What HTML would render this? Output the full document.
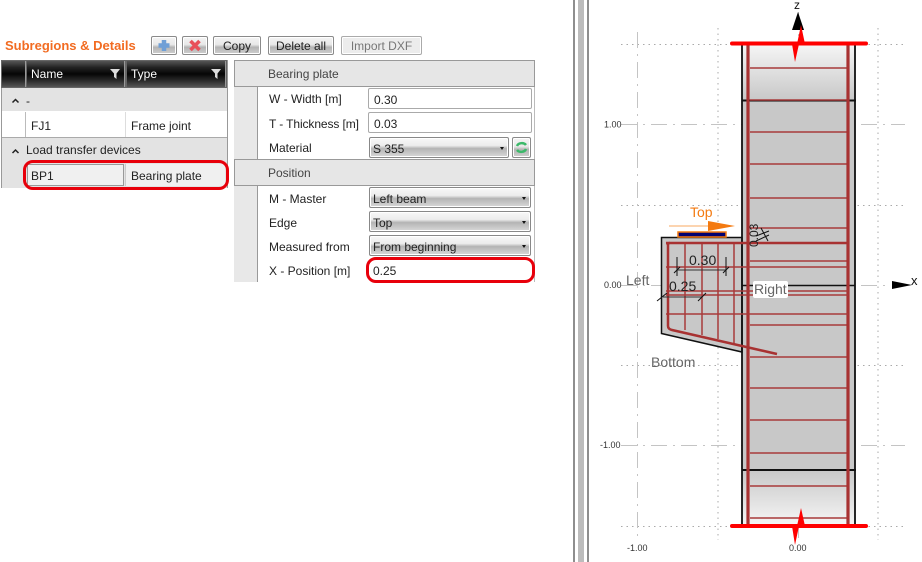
<!DOCTYPE html>
<html><head><meta charset="utf-8">
<style>
html,body{margin:0;padding:0;background:#fff;}
#p{position:relative;width:922px;height:562px;overflow:hidden;background:#fff;font:12px "Liberation Sans",sans-serif;color:#222;}
#p div{position:absolute;box-sizing:border-box;white-space:nowrap;}
.btn{height:19px;top:36px;border:1px solid #8a8a8a;border-radius:2px;background:linear-gradient(#f4f4f4 0,#e8e8e8 45%,#b4b4b4 60%,#cfcfcf 100%);text-align:center;line-height:18px;box-shadow:inset 0 0 0 1px #fff;}
.hd{top:61px;height:26px;background:linear-gradient(#555 0,#222 25%,#060606 50%,#2a2a2a 75%,#555 100%);color:#fff;line-height:27px;padding-left:4px;border-right:1px solid #999;}
.t{line-height:14px;height:14px;}
.inp{left:368px;width:164px;height:21px;border:1px solid #aaa;border-radius:2px;background:#fff;padding-left:5px;line-height:22px;}
.sel{left:369px;height:21px;width:162px;border:1px solid #888;border-radius:2px;background:linear-gradient(#f8f8f8 0,#ececec 40%,#b4b4b4 55%,#d8d8d8 100%);padding-left:3px;line-height:22px;box-shadow:inset 0 0 0 1px #fff;}
.sel:after{content:"";position:absolute;right:4px;top:9px;border-left:2.5px solid transparent;border-right:2.5px solid transparent;border-top:3px solid #111;}
</style></head>
<body><div id="p">

<div class="t" style="left:5px;top:39px;font-weight:bold;color:#f26b21;font-size:13px;">Subregions &amp; Details</div>
<div class="btn" style="left:151px;width:26px;"></div>
<div class="btn" style="left:182px;width:26px;"></div>
<div class="btn" style="left:213px;width:48px;">Copy</div>
<div class="btn" style="left:268px;width:66px;">Delete all</div>
<div class="btn" style="left:341px;width:81px;background:#ececec;color:#777;border-color:#aaa;">Import DXF</div>
<svg style="position:absolute;left:151px;top:36px" width="60" height="19">
<path d="M13 4v11M7.5 9.5h11" stroke="#6f9fd6" stroke-width="4.5" fill="none"/>
<path d="M39.5 5l9 9M48.5 5l-9 9" stroke="#e8505a" stroke-width="3.6" fill="none"/>
</svg>

<div style="left:1px;top:60px;width:227px;height:128px;border:1px solid #999;border-top:0;background:#fff;"></div>
<div style="left:1px;top:60px;width:226px;height:28px;background:#666;"></div>
<div class="hd" style="left:2px;width:24px;"></div>
<div class="hd" style="left:27px;width:98px;">Name</div>
<div class="hd" style="left:127px;width:99px;">Type</div>
<svg style="position:absolute;left:108px;top:67px" width="115" height="14">
<path d="M2 2h10L8.5 6.5V12L6 10V6.500z" fill="#ddd"/><path d="M103 2h10l-3.500 4.500V12L107 10V6.500z" fill="#ddd"/></svg>

<div style="left:2px;top:88px;width:225px;height:23px;background:#e3e3e3;"></div>
<div style="left:25px;top:112px;width:201px;height:25px;background:#fff;border-left:1px solid #bbb;"></div>
<div style="left:125px;top:112px;width:1px;height:25px;background:#ddd;"></div>
<div style="left:2px;top:137px;width:225px;height:26px;background:#e3e3e3;border-top:1px solid #aaa;"></div>
<div style="left:2px;top:163px;width:225px;height:25px;background:#e3e3e3;"></div>
<div style="left:27px;top:164px;width:97px;height:22px;background:#f0f0f0;border:1px solid #999;"></div>
<div style="left:125px;top:164px;width:100px;height:22px;background:#f0f0f0;border-left:1px solid #ccc;"></div>
<svg style="position:absolute;left:10px;top:95px" width="12" height="60">
<path d="M2.500 7.500L5.500 4.500L8.500 7.500M2.500 58L5.500 55L8.500 58" stroke="#222" stroke-width="1.500" fill="none"/></svg>
<div class="t" style="left:26px;top:94px;">-</div>
<div class="t" style="left:31px;top:119px;">FJ1</div>
<div class="t" style="left:131px;top:119px;">Frame joint</div>
<div class="t" style="left:26px;top:143px;">Load transfer devices</div>
<div class="t" style="left:31px;top:169px;">BP1</div>
<div class="t" style="left:131px;top:169px;">Bearing plate</div>
<div style="left:23px;top:160px;width:206px;height:30px;border:3px solid #e8000b;border-radius:10px;"></div>

<div style="left:234px;top:60px;width:301px;height:222px;background:#fff;"></div>
<div style="left:234px;top:60px;width:24px;height:222px;background:#e8e8e8;border-right:1px solid #999;"></div>
<div style="left:234px;top:60px;width:301px;height:27px;background:#e6e6e6;border:1px solid #999;color:#444;padding-left:33px;line-height:26px;">Bearing plate</div>
<div style="left:234px;top:159px;width:301px;height:27px;background:#e6e6e6;border:1px solid #999;color:#444;padding-left:33px;line-height:26px;">Position</div>
<div style="left:534px;top:87px;width:1px;height:72px;background:#bbb;"></div>
<div style="left:534px;top:186px;width:1px;height:96px;background:#bbb;"></div>
<div class="t" style="left:269px;top:92px;">W - Width [m]</div>
<div class="t" style="left:269px;top:117px;letter-spacing:-.1px;">T - Thickness [m]</div>
<div class="t" style="left:269px;top:141px;">Material</div>
<div class="t" style="left:269px;top:192px;">M - Master</div>
<div class="t" style="left:269px;top:216px;">Edge</div>
<div class="t" style="left:269px;top:240px;">Measured from</div>
<div class="t" style="left:269px;top:264px;">X - Position [m]</div>
<div class="inp" style="top:88px;">0.30</div>
<div class="inp" style="top:112px;">0.03</div>
<div class="sel" style="top:137px;width:140px;">S 355</div>
<div class="btn" style="left:512px;top:137px;width:19px;height:21px;"></div>
<svg style="position:absolute;left:512px;top:137px" width="19" height="21"><path d="M5 9a5 4 0 0 1 9-1M14 12a5 4 0 0 1-9 1" stroke="#3cb96a" stroke-width="2.500" fill="none"/></svg>
<div class="sel" style="top:187px;">Left beam</div>
<div class="sel" style="top:211px;">Top</div>
<div class="sel" style="top:235px;">From beginning</div>
<div class="t" style="left:373px;top:264px;">0.25</div>
<div style="left:366px;top:257px;width:169px;height:26px;border:3px solid #e8000b;border-radius:10px;"></div>

<div style="left:573px;top:0;width:2px;height:562px;background:#8e8e8e;"></div>
<div style="left:578px;top:0;width:6px;height:562px;background:#bcbcbc;"></div>
<div style="left:587px;top:0;width:2px;height:562px;background:#8e8e8e;"></div>

<svg style="position:absolute;left:0;top:0" width="922" height="562" font-family="'Liberation Sans',sans-serif">
<defs>
<linearGradient id="g1" x1="0" y1="0" x2="0" y2="1"><stop offset="0" stop-color="#f6f6f6"/><stop offset="1" stop-color="#c8c8c8"/></linearGradient>
<linearGradient id="g2" x1="0" y1="1" x2="0" y2="0"><stop offset="0" stop-color="#f6f6f6"/><stop offset="1" stop-color="#c8c8c8"/></linearGradient>
</defs>
<g stroke="#c4c4c4" fill="none">
<path d="M621 44.500H905M621 205.500H905M621 365.500H905M621 526.500H905M718 28V540M878 28V540" stroke-dasharray="1.500 4" stroke="#aaa"/>
<path d="M637.500 32V540M798.500 12V540" stroke-dasharray="16 6 2 6"/>
<path d="M621 124.500H905M621 285.500H885M621 445.500H905" stroke-dasharray="16 6 2 6"/>
</g>
<g font-size="9" fill="#333">
<text x="604" y="127.500">1.00</text><text x="604" y="288">0.00</text><text x="600" y="448">-1.00</text>
<text x="627" y="551">-1.00</text><text x="789" y="551">0.00</text>
</g>
<rect x="742" y="44" width="113" height="56" fill="url(#g1)"/>
<rect x="742" y="100" width="113" height="370" fill="#c8c8c8"/>
<rect x="742" y="470" width="113" height="56" fill="url(#g2)"/>
<path d="M661.500 237.500H742V352L661.500 333.500Z" fill="#c8c8c8" stroke="#111" stroke-width="1.500"/>
<path d="M742 44V526M855 44V526" stroke="#111" stroke-width="1.800" fill="none"/>
<path d="M742 100.500H856M742 470H856" stroke="#111" stroke-width="2" fill="none"/>
<path d="M742 285.500H855" stroke="#111" stroke-width="1.500"/>
<path d="M750 68H848M750 100H848M750 132H848M750 164H848M750 198H848M750 228H848M750 261H848M750 325H848M750 357H848M750 388H848M750 420H848M750 453H848M750 486H848M750 518H848" stroke="#a83a3a" stroke-width="1.500" fill="none"/>
<path d="M748 44V526M848 44V526" stroke="#a83232" stroke-width="3.200" fill="none"/>
<path d="M666 243H848" stroke="#a83232" stroke-width="2.500" fill="none"/>
<path d="M666 267H848M666 291H848M666 295H848M666 314H848" stroke="#a83a3a" stroke-width="1.500" fill="none"/>
<path d="M685 244V330M702 244V335M718 244V339M734 244V343" stroke="#a83a3a" stroke-width="1.500" fill="none"/>
<path d="M668 245Q667 243 670 243M668 243V326Q668 329 672 330L777 354" stroke="#a83232" stroke-width="2.500" fill="none"/>
<path d="M677 270H726M663 297H702" stroke="#333" stroke-width="1"/>
<path d="M677 257V276M726 257V276M674 273L680 267M723 273L729 267M657 301L667 293M698 301L706 293" stroke="#111" stroke-width="1"/>
<g font-size="14" fill="#222"><text x="689" y="265" >0.30</text><text x="669" y="291">0.25</text></g>
<rect x="678" y="232" width="48" height="5" fill="#000070" stroke="#f47a10" stroke-width="1.500"/>
<path d="M669 226H708" stroke="#f9a860" stroke-width="1"/>
<path d="M708 221L735 226L708 231Z" fill="#f47a10"/>
<text x="690" y="217" font-size="14" fill="#f47a10">Top</text>
<text transform="translate(758 247) rotate(-90)" font-size="12" fill="#222">0.03</text>
<path d="M756 236L769 231M756 241L769 235M761 228L768 241" stroke="#111" stroke-width="1"/>
<rect x="753" y="281" width="35" height="17" rx="2" fill="#fff"/>
<text x="754" y="294" font-size="14" fill="#666">Right</text>
<text x="626" y="285" font-size="14" fill="#666">Left</text>
<text x="651" y="367" font-size="14" fill="#666">Bottom</text>
<path d="M892 281L912 285L892 289Z" fill="#000"/>
<text x="911" y="285" font-size="13" fill="#111">x</text>
<path d="M798 12L792 30H804Z" fill="#000"/>
<text x="794" y="9" font-size="12" fill="#111">z</text>
<path d="M732 43.500H866M732 526H866" stroke="#f00" stroke-width="4" stroke-linecap="round" fill="none"/>
<path d="M792 44L795 62L799 44ZM797 44L801 25L805 44Z" fill="#f00"/>
<path d="M792 526L795 545L799 526ZM797 526L801 508L805 526Z" fill="#f00"/>
</svg>
</div></body></html>
